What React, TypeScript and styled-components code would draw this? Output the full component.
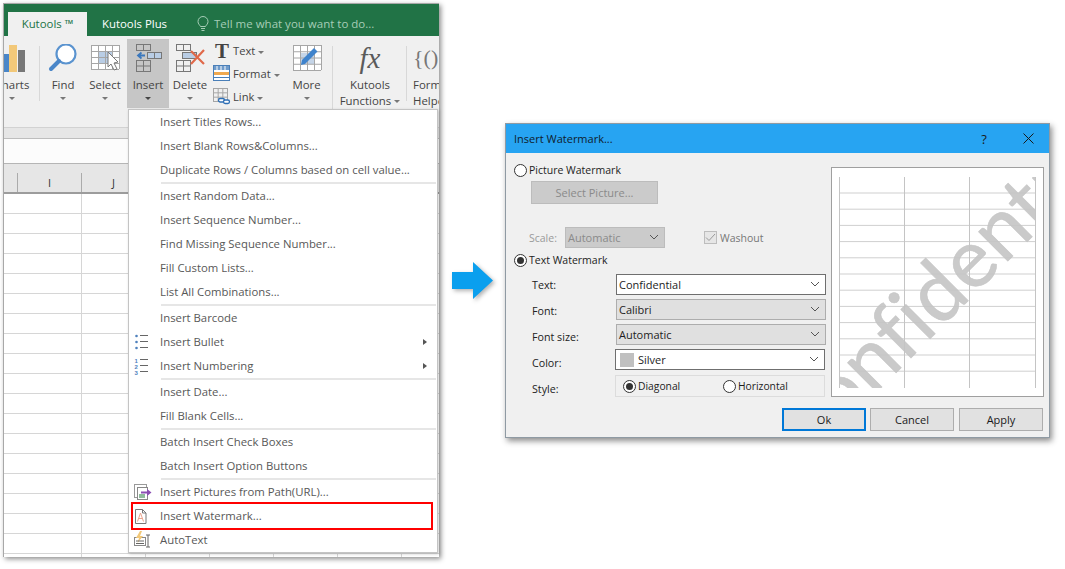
import React from "react";
import styled, { createGlobalStyle } from "styled-components";

const Global = createGlobalStyle`
  html, body { margin: 0; padding: 0; background: #fff; }
  body { font-family: "Open Sans", "Liberation Sans", sans-serif; font-size: 11px; }
  #root { width: 1065px; height: 569px; overflow: hidden; }
  * { box-sizing: border-box; }
`;

const Page = styled.div`
  width: 1065px; height: 569px; display: flex; align-items: flex-start; padding: 3px 0 0 3px; background: #fff;
`;

/* ---------- Excel ---------- */
const ExcelWindow = styled.div`
  position: relative; width: 436px; height: 554px; flex: none; display: flex; flex-direction: column;
  border: 1px solid #a8a8a8; border-right: 0; border-bottom: 0; background: #fff;
  box-shadow: 2px 2px 5px rgba(0,0,0,.45);
`;
const TabBar = styled.div`
  height: 32px; flex: none; background: #217346; display: flex; align-items: flex-end; padding-left: 4px;
`;
const Tab = styled.div<{ $active?: boolean }>`
  height: 24px; padding-bottom: 1px; display: flex; align-items: center; justify-content: center; flex: none;
  width: ${p => (p.$active ? 79 : 95)}px;
  background: ${p => (p.$active ? "#f0f0f0" : "transparent")};
  color: ${p => (p.$active ? "#217346" : "#fff")};
  font-size: 11.4px;
`;
const TellMe = styled.div`
  height: 24px; padding-bottom: 2px; display: flex; align-items: center; gap: 5px; margin-left: 15px; color: #a6cdb6; font-size: 11.5px;
`;
const Ribbon = styled.div`
  height: 92px; flex: none; background: #f0f0f0; display: flex; align-items: flex-start; overflow: hidden;
  border-bottom: 1px solid #d2d2d2; padding-top: 3px;
`;
const BigButton = styled.div<{ $w: number; $active?: boolean; $ml?: number; $start?: boolean }>`
  width: ${p => p.$w}px; height: 69px; flex: none; display: flex; flex-direction: column;
  align-items: ${p => (p.$start ? "flex-start" : "center")};
  margin-left: ${p => p.$ml ?? 0}px; padding: 5px 0 0 ${p => (p.$start ? 6 : 0)}px; white-space: nowrap; color: #444; font-size: 11.4px;
  background: ${p => (p.$active ? "#c6c6c6" : "transparent")};
`;
const IconBox = styled.div`
  height: 28px; display: flex; align-items: flex-start; justify-content: center; flex: none;
`;
const BigLabel = styled.div`
  margin-top: 5px; height: 16px; line-height: 16px; text-align: center;
`;
const Caret = styled.i<{ $dark?: boolean }>`
  display: block; width: 0; height: 0; margin-top: 4px; flex: none;
  border-left: 3px solid transparent; border-right: 3px solid transparent;
  border-top: 3px solid ${p => (p.$dark ? "#444" : "#777")};
`;
const InlineCaret = styled(Caret)`
  display: inline-block; margin: 0 0 0 3px; vertical-align: middle;
`;
const RibbonSep = styled.div<{ $ml?: number; $h?: number }>`
  width: 1px; flex: none; height: ${p => p.$h ?? 55}px; margin: 7px 0 0 ${p => p.$ml ?? 0}px; background: #d8d8d8;
`;
const SmallGroup = styled.div`
  width: 76px; flex: none; margin-left: 2px; display: flex; flex-direction: column; padding-top: 0;
`;
const SmallRow = styled.div`
  height: 23px; display: flex; align-items: center; gap: 2px; color: #444; font-size: 11.2px; white-space: nowrap;
`;
const SmallIcon = styled.div`
  width: 18px; height: 20px; flex: none; display: flex; align-items: center; justify-content: center;
`;
const TGlyph = styled.span`
  font-family: "Liberation Serif", serif; font-weight: 700; font-size: 21px; line-height: 20px; color: #444;
`;
const FxGlyph = styled.span`
  font-family: "Liberation Serif", serif; font-style: italic; font-size: 29px; line-height: 28px; color: #5a5a5a;
`;
const BraceGlyph = styled.span`
  font-family: "Liberation Serif", serif; font-size: 22px; line-height: 28px; color: #777;
`;
const Band = styled.div`
  height: 11px; flex: none; background: #e6e6e6; border-bottom: 1px solid #bdbdbd;
`;
const FormulaBar = styled.div`
  height: 25px; flex: none; background: #fcfcfc; border-bottom: 1px solid #b5b5b5;
`;
const ColumnHeader = styled.div`
  height: 30px; flex: none; background: #e6e6e6; display: flex; align-items: flex-end; border-bottom: 2px solid #9c9c9c; padding-left: 13px;
`;
const ColumnCell = styled.div`
  width: 64px; height: 19px; flex: none; border-left: 1px solid #ababab; display: flex; align-items: center; justify-content: center;
  color: #333; font-size: 11px;
`;
const Sheet = styled.div`
  flex: 1; background-color: #fff;
  background-image:
    repeating-linear-gradient(to bottom, transparent 0 19px, #d6d6d6 19px 20px),
    repeating-linear-gradient(to right, transparent 0 63px, #d6d6d6 63px 64px);
  background-position: 0 0, 14px 0;
`;
const Menu = styled.div`
  position: absolute; left: 124px; top: 105px; width: 310px; height: 444px; background: #fff;
  border: 1px solid #c4c4c4; box-shadow: 1px 1px 3px rgba(0,0,0,.2); display: flex; flex-direction: column;
`;
const MenuItem = styled.div<{ $marked?: boolean }>`
  position: relative; height: 24px; flex: none; display: flex; align-items: center; padding: 0 0 2px 31px;
  color: #585858; font-size: 11.35px;
  ${p => p.$marked ? `&::after { content: ""; position: absolute; left: 2px; right: 4px; top: -2px; bottom: -2px; border: 2px solid #f00; }` : ""}
`;
const MenuIcon = styled.div`
  position: absolute; left: 5px; top: 3px; width: 18px; height: 18px;
`;
const SubArrow = styled.i`
  position: absolute; right: 10px; top: 9px; width: 0; height: 0;
  border-top: 3.5px solid transparent; border-bottom: 3.5px solid transparent; border-left: 4px solid #555;
`;
const MenuSep = styled.div`
  height: 2px; flex: none; margin: 0 1px 0 32px; background: #e6e6e6;
`;

/* ---------- Arrow ---------- */
const ArrowSlot = styled.div`
  width: 41px; height: 38px; flex: none; margin: 259px 0 0 13px; filter: drop-shadow(2px 2px 2px rgba(0,0,0,.3));
`;

/* ---------- Dialog ---------- */
const Dialog = styled.div`
  width: 545px; height: 315px; flex: none; margin: 120px 0 0 12px; display: flex; flex-direction: column;
  background: #f0f0f0; border: 1px solid #8f9aa3; box-shadow: 2px 3px 6px rgba(0,0,0,.45);
`;
const TitleBar = styled.div`
  height: 29px; flex: none; background: #27a4f2; display: flex; align-items: center; padding: 0 15px 0 8px; color: #10202c; font-size: 11px;
`;
const TitleText = styled.div`
  flex: 1;
`;
const HelpMark = styled.div`
  width: 12px; margin-right: 33px; font-size: 13px; text-align: center; color: #1a1a1a;
`;
const DialogBody = styled.div`
  display: grid; grid-template-columns: 312px 213px; column-gap: 5px; padding: 10px 0 0 8px;
`;
const LeftColumn = styled.div`
  display: flex; flex-direction: column; color: #1d1d1d; font-size: 10.5px;
`;
const RadioRow = styled.label<{ $mb: number }>`
  height: 14px; display: flex; align-items: center; gap: 2px; margin-bottom: ${p => p.$mb}px; line-height: 12px;
`;
const RadioDot = styled.span<{ $on?: boolean }>`
  width: 13px; height: 13px; flex: none; border-radius: 50%; border: 1px solid #333; background: #fff; display: flex; align-items: center; justify-content: center;
  &::after { content: ""; width: 7px; height: 7px; border-radius: 50%; background: ${p => (p.$on ? "#333" : "transparent")}; }
`;
const DisabledButton = styled.div`
  width: 127px; height: 23px; margin: 0 0 23px 17px; background: #cbcbcb; border: 1px solid #bcbcbc; color: #8a8a8a;
  display: flex; align-items: center; justify-content: center; font-size: 11px;
`;
const ScaleRow = styled.div`
  height: 21px; display: flex; align-items: center; margin-bottom: 5px; color: #9a9a9a; padding-left: 15px;
`;
const ScaleLabel = styled.div`
  width: 36px; flex: none;
`;
const Washout = styled.div`
  margin-left: 39px; display: flex; align-items: center; gap: 3px; color: #777;
`;
const CheckBox = styled.div`
  width: 13px; height: 13px; background: #e6e6e6; border: 1px solid #bdbdbd; display: flex; align-items: center; justify-content: center;
`;
const FieldArea = styled.div`
  display: grid; grid-template-columns: 102px 210px;
`;
const LabelColumn = styled.div`
  display: flex; flex-direction: column; padding: 3px 0 0 18px; gap: 9px; color: #222; font-size: 10.7px;
`;
const FieldLabel = styled.div`
  height: 17px; line-height: 17px;
`;
const FieldColumn = styled.div`
  display: flex; flex-direction: column; gap: 4px;
`;
const SelectBox = styled.div<{ $kind: "open" | "grey" | "off"; $w?: number; $ml?: number }>`
  height: 21px; flex: none; width: ${p => (p.$w ? `${p.$w}px` : "auto")}; margin-left: ${p => p.$ml ?? 0}px;
  display: flex; align-items: center; justify-content: space-between; padding: 0 5px 1px 2px; font-size: 11px;
  background: ${p => (p.$kind === "open" ? "#fff" : p.$kind === "grey" ? "#e0e0e0" : "#cbcbcb")};
  border: 1px solid ${p => (p.$kind === "open" ? "#6f6f6f" : p.$kind === "grey" ? "#adadad" : "#bcbcbc")};
  color: ${p => (p.$kind === "off" ? "#8a8a8a" : "#1d1d1d")};
`;
const Swatch = styled.span`
  width: 14px; height: 14px; background: #c0c0c0; margin: 1px 4px 0 2px; flex: none;
`;
const SelectValue = styled.span`
  flex: 1; display: flex; align-items: center;
`;
const StyleBox = styled.div`
  height: 22px; width: 210px; margin: 1px 0 0 -1px; border: 1px solid #dcdcdc; display: flex; align-items: center; padding: 0 0 0 7px; font-size: 10.3px;
`;
const StyleOption = styled.div<{ $w: number }>`
  width: ${p => p.$w}px; display: flex; align-items: center; gap: 2px; flex: none;
`;
const Preview = styled.div`
  width: 213px; height: 230px; margin-top: 4px; background: #fff; border: 1px solid #9f9f9f; line-height: 0;
`;
const Footer = styled.div`
  display: flex; padding: 10px 0 0 276px;
`;
const DlgButton = styled.div<{ $primary?: boolean; $w: number; $ml?: number }>`
  width: ${p => p.$w}px; height: 23px; margin-left: ${p => p.$ml ?? 0}px; flex: none; display: flex; align-items: center; justify-content: center;
  background: #e1e1e1; border: ${p => (p.$primary ? "2px solid #0078d7" : "1px solid #adadad")}; color: #1a1a1a; font-size: 11px;
`;

/* ---------- Icon drawings ---------- */
const Svg: React.FC<{ w: number; h: number; children: React.ReactNode }> = ({ w, h, children }) => (
  <svg width={w} height={h} viewBox={`0 0 ${w} ${h}`} fill="none" style={{ display: "block" }}>{children}</svg>
);
const Chev = () => (
  <Svg w={10} h={6}><path d="M1 1l4 4 4-4" stroke="#555" strokeWidth="1" /></Svg>
);
const ChartsIcon = () => (
  <Svg w={30} h={28}>
    <rect x="7" y="10" width="5" height="18" fill="#4a86c8" />
    <rect x="12" y="1" width="8" height="27" fill="#f2c879" />
    <rect x="21" y="6" width="7" height="22" fill="#777" />
  </Svg>
);
const FindIcon = () => (
  <Svg w={30} h={28}>
    <circle cx="18" cy="10" r="9.5" stroke="#5a93cf" strokeWidth="2.2" fill="#fff" />
    <path d="M11 17L3 25" stroke="#4a86c8" strokeWidth="4" strokeLinecap="round" />
  </Svg>
);
const gridLines = (x: number, y: number, w: number, h: number, cols: number, rows: number, c = "#a6a6a6") => {
  const out: React.ReactNode[] = [];
  for (let i = 0; i <= cols; i++) out.push(<path key={`v${i}`} d={`M${x + (w * i) / cols + .5} ${y}v${h}`} stroke={c} />);
  for (let i = 0; i <= rows; i++) out.push(<path key={`h${i}`} d={`M${x} ${y + (h * i) / rows + .5}h${w}`} stroke={c} />);
  return out;
};
const SelectIcon = () => (
  <Svg w={30} h={27}>
    <rect x="1" y="1" width="28" height="24" fill="#fff" />
    <rect x="8" y="7" width="14" height="13" fill="#b9cde5" />
    {gridLines(1, 1, 28, 24, 4, 4)}
    <path d="M18 8l0 15 3-3 3 6 3-1-3-6 4-1z" fill="#fff" stroke="#777" />
  </Svg>
);
const cells = (x: number, y: number, w: number, h: number, cols: number, rows: number, c = "#777") => (
  <>
    <rect x={x + .5} y={y + .5} width={w} height={h} stroke={c} />
    {cols === 2 && <path d={`M${x + w / 2 + .5} ${y}v${h}`} stroke={c} />}
    {rows === 2 && <path d={`M${x} ${y + h / 2 + .5}h${w}`} stroke={c} />}
  </>
);
const InsertIcon = () => (
  <Svg w={27} h={28}>
    {cells(1, 0, 14, 6, 2, 1)}
    <rect x="12.5" y="8.5" width="14" height="6" fill="#b9cde5" stroke="#777" />
    <path d="M19.500 8.500v6" stroke="#777" />
    <path d="M10 11.500H4M6.500 8.500l-3.500 3 3.500 3" stroke="#3b78bd" strokeWidth="1.800" />
    {cells(1, 16, 14, 11, 2, 2)}
  </Svg>
);
const DeleteIcon = () => (
  <Svg w={31} h={28}>
    {cells(1, 0, 14, 6, 2, 1)}
    <rect x="7.500" y="8.500" width="14" height="6" fill="#b9cde5" stroke="#777" />
    {cells(1, 16, 14, 11, 2, 2)}
    <path d="M16 7l13 13M29 6L16 20" stroke="#e0694a" strokeWidth="2.200" />
  </Svg>
);
const MoreIcon = () => (
  <Svg w={30} h={27}>
    <rect x="1" y="1" width="28" height="25" fill="#fff" />
    <rect x="8" y="9" width="15" height="11" fill="#c5d5e8" />
    {gridLines(1, 1, 28, 25, 4, 4)}
    <path d="M9 21l1-5L22 4l3.500 3.500L13 20z" fill="#3f83cc" />
  </Svg>
);
const FormatIcon = () => (
  <Svg w={18} h={17}>
    <rect x=".5" y=".5" width="16" height="15" fill="#fff" stroke="#4a7fb8" />
    <rect x="1" y="1" width="15" height="4" fill="#6f9bcb" />
    <path d="M4 1v4M8 1v4M12 1v4" stroke="#fff" />
    <rect x="1" y="7" width="15" height="3" fill="#f0a94f" />
    <path d="M1 12.500h15" stroke="#4a7fb8" />
  </Svg>
);
const LinkIcon = () => (
  <Svg w={18} h={17}>
    {gridLines(0, 0, 14, 13, 3, 3)}
    <rect x="5.500" y="10.500" width="6" height="3.500" rx="1.700" stroke="#2f6fb5" strokeWidth="1.300" fill="#fff" />
    <rect x="10.500" y="12" width="6" height="3.500" rx="1.700" stroke="#2f6fb5" strokeWidth="1.300" fill="#fff" />
  </Svg>
);
const BulbIcon = () => (
  <Svg w={12} h={15}>
    <path d="M3.500 10.500C2.500 8.500 1 8 1 5.500a5 5 0 0 1 10 0c0 2.500-1.500 3-2.500 5z" stroke="#a6cdb6" />
    <path d="M4 12.500h4M4.500 14.500h3" stroke="#a6cdb6" />
  </Svg>
);
const BulletIcon = () => (
  <Svg w={18} h={18}>
    {[3, 9, 15].map(y => <circle key={y} cx="2.500" cy={y} r="1.300" fill="#4f81bd" />)}
    {[3, 9, 15].map(y => <path key={y} d={`M6 ${y - .5}h8`} stroke="#666" />)}
  </Svg>
);
const NumberingIcon = () => (
  <Svg w={18} h={18}>
    {[1, 2, 3].map(n => <text key={n} x="0.500" y={n * 6 - 0.5} fontSize="6" fontWeight="700" fontFamily="Liberation Sans, sans-serif" fill="#4f81bd">{n}</text>)}
    {[3, 9, 15].map(y => <path key={y} d={`M6 ${y - .5}h8`} stroke="#666" />)}
  </Svg>
);
const PicturesIcon = () => (
  <Svg w={18} h={18}>
    <rect x=".500" y="1.500" width="12" height="13" stroke="#999" fill="#fff" />
    <rect x="3.500" y="4.500" width="10" height="12" stroke="#888" fill="#fff" />
    <rect x="5" y="11" width="6" height="4" fill="#8fbc9b" />
    <path d="M7 8.500h6V6l4.500 3.500L13 13v-2.500H7z" fill="#8b4fb3" />
  </Svg>
);
const WatermarkIcon = () => (
  <Svg w={18} h={18}>
    <path d="M1.500 2.500h7l3.500 3.500v10.500H1.500z" stroke="#777" fill="#fff" />
    <path d="M8.500 2.500V6H12" stroke="#777" />
    <path d="M3.500 14.500L6.500 6l3 8.500M4.500 11.500h4" stroke="#eaa48e" />
  </Svg>
);
const AutoTextIcon = () => (
  <Svg w={18} h={18}>
    <rect x=".500" y="6.500" width="11" height="8" stroke="#888" fill="#fff" />
    <path d="M6 0L2 7h3l-1.500 5L9 5H6l2-5z" fill="#f2c879" />
    <path d="M12 4h4M14 4v12M12 16h4M2 10h8M2 12.500h8" stroke="#666" />
  </Svg>
);

type Entry = { label: string; icon?: React.ReactNode; sub?: boolean; marked?: boolean } | "sep";
const menu: Entry[] = [
  { label: "Insert Titles Rows..." }, { label: "Insert Blank Rows&Columns..." }, { label: "Duplicate Rows / Columns based on cell value..." }, "sep",
  { label: "Insert Random Data..." }, { label: "Insert Sequence Number..." }, { label: "Find Missing Sequence Number..." }, { label: "Fill Custom Lists..." }, { label: "List All Combinations..." }, "sep",
  { label: "Insert Barcode" }, { label: "Insert Bullet", icon: <BulletIcon />, sub: true }, { label: "Insert Numbering", icon: <NumberingIcon />, sub: true }, "sep",
  { label: "Insert Date..." }, { label: "Fill Blank Cells..." }, "sep",
  { label: "Batch Insert Check Boxes" }, { label: "Batch Insert Option Buttons" }, "sep",
  { label: "Insert Pictures from Path(URL)...", icon: <PicturesIcon /> }, { label: "Insert Watermark...", icon: <WatermarkIcon />, marked: true }, { label: "AutoText", icon: <AutoTextIcon /> },
];

const previewRows = Array.from({ length: 12 }, (_, i) => 25 + i * 16.2);
const PreviewDrawing = () => (
  <svg width="211" height="228" viewBox="0 0 211 228">
    <defs><clipPath id="pv"><rect x="7" y="9" width="196" height="211" /></clipPath></defs>
    {previewRows.map(y => <path key={y} d={`M7 ${y}H203`} stroke="#cfcfcf" />)}
    {[7.5, 72.5, 137.5, 203.500].map(x => <path key={x} d={`M${x} 9V220`} stroke="#c4c4c4" />)}
    <g clipPath="url(#pv)">
      <text x="-31" y="300" transform="rotate(-45 -31 300)" fontFamily="Lato, sans-serif" fontSize="82" letterSpacing=".5" fill="#c4c4c4" fillOpacity=".9" stroke="#c4c4c4" strokeOpacity=".9" strokeWidth=".6">Confidential</text>
    </g>
  </svg>
);

export default function App() {
  return (
    <>
      <Global />
      <Page>
        <ExcelWindow>
          <TabBar>
            <Tab $active>Kutools ™</Tab>
            <Tab>Kutools Plus</Tab>
            <TellMe><BulbIcon />Tell me what you want to do...</TellMe>
          </TabBar>
          <Ribbon>
            <BigButton $w={46} $ml={-15}><IconBox><ChartsIcon /></IconBox><BigLabel>Charts</BigLabel><Caret /></BigButton>
            <RibbonSep $ml={4} />
            <BigButton $w={42} $ml={2}><IconBox><FindIcon /></IconBox><BigLabel>Find</BigLabel><Caret /></BigButton>
            <BigButton $w={42}><IconBox><SelectIcon /></IconBox><BigLabel>Select</BigLabel><Caret /></BigButton>
            <BigButton $w={42} $ml={1} $active><IconBox><InsertIcon /></IconBox><BigLabel>Insert</BigLabel><Caret $dark /></BigButton>
            <BigButton $w={42}><IconBox><DeleteIcon /></IconBox><BigLabel>Delete</BigLabel><Caret /></BigButton>
            <SmallGroup>
              <SmallRow><SmallIcon><TGlyph>T</TGlyph></SmallIcon><span>Text<InlineCaret /></span></SmallRow>
              <SmallRow><SmallIcon><FormatIcon /></SmallIcon><span>Format<InlineCaret /></span></SmallRow>
              <SmallRow><SmallIcon><LinkIcon /></SmallIcon><span>Link<InlineCaret /></span></SmallRow>
            </SmallGroup>
            <BigButton $w={35}><IconBox><MoreIcon /></IconBox><BigLabel>More</BigLabel><Caret /></BigButton>
            <RibbonSep $ml={8} $h={70} />
            <BigButton $w={72} $ml={1}>
              <IconBox><FxGlyph>fx</FxGlyph></IconBox>
              <BigLabel>Kutools</BigLabel>
              <div>Functions<InlineCaret /></div>
            </BigButton>
            <RibbonSep />
            <BigButton $w={36} $start>
              <IconBox><BraceGlyph>{"{()"}</BraceGlyph></IconBox>
              <BigLabel>Formula</BigLabel>
              <div>Helper</div>
            </BigButton>
          </Ribbon>
          <Band />
          <FormulaBar />
          <ColumnHeader>
            <ColumnCell>I</ColumnCell>
            <ColumnCell>J</ColumnCell>
          </ColumnHeader>
          <Sheet />
          <Menu>
            {menu.map((m, i) => m === "sep" ? <MenuSep key={i} /> : (
              <MenuItem key={i} $marked={m.marked}>
                {m.icon && <MenuIcon>{m.icon}</MenuIcon>}
                {m.label}
                {m.sub && <SubArrow />}
              </MenuItem>
            ))}
          </Menu>
        </ExcelWindow>

        <ArrowSlot>
          <svg width="41" height="38" viewBox="0 0 41 38">
            <path d="M0 10H21V0L41 18.500 21 37V27H0z" fill="#0a9fee" />
          </svg>
        </ArrowSlot>

        <Dialog>
          <TitleBar>
            <TitleText>Insert Watermark...</TitleText>
            <HelpMark>?</HelpMark>
            <Svg w={11} h={11}><path d="M.5.5l10 10M10.500.5l-10 10" stroke="#1a1a1a" /></Svg>
          </TitleBar>
          <DialogBody>
            <LeftColumn>
              <RadioRow $mb={4}><RadioDot />Picture Watermark</RadioRow>
              <DisabledButton>Select Picture...</DisabledButton>
              <ScaleRow>
                <ScaleLabel>Scale:</ScaleLabel>
                <SelectBox $kind="off" $w={100}><SelectValue>Automatic</SelectValue><Chev /></SelectBox>
                <Washout>
                  <CheckBox><Svg w={11} h={9}><path d="M1 4.500l3 3L10 1" stroke="#9a9a9a" /></Svg></CheckBox>
                  Washout
                </Washout>
              </ScaleRow>
              <RadioRow $mb={7}><RadioDot $on />Text Watermark</RadioRow>
              <FieldArea>
                <LabelColumn>
                  <FieldLabel>Text:</FieldLabel>
                  <FieldLabel>Font:</FieldLabel>
                  <FieldLabel>Font size:</FieldLabel>
                  <FieldLabel>Color:</FieldLabel>
                  <FieldLabel>Style:</FieldLabel>
                </LabelColumn>
                <FieldColumn>
                  <SelectBox $kind="open"><SelectValue>Confidential</SelectValue><Chev /></SelectBox>
                  <SelectBox $kind="grey"><SelectValue>Calibri</SelectValue><Chev /></SelectBox>
                  <SelectBox $kind="grey"><SelectValue>Automatic</SelectValue><Chev /></SelectBox>
                  <SelectBox $kind="open" $ml={-1} $w={210}><SelectValue><Swatch />Silver</SelectValue><Chev /></SelectBox>
                  <StyleBox>
                    <StyleOption $w={100}><RadioDot $on />Diagonal</StyleOption>
                    <StyleOption $w={90}><RadioDot />Horizontal</StyleOption>
                  </StyleBox>
                </FieldColumn>
              </FieldArea>
            </LeftColumn>
            <Preview><PreviewDrawing /></Preview>
          </DialogBody>
          <Footer>
            <DlgButton $primary $w={84}>Ok</DlgButton>
            <DlgButton $w={84} $ml={4}>Cancel</DlgButton>
            <DlgButton $w={84} $ml={5}>Apply</DlgButton>
          </Footer>
        </Dialog>
      </Page>
    </>
  );
}
